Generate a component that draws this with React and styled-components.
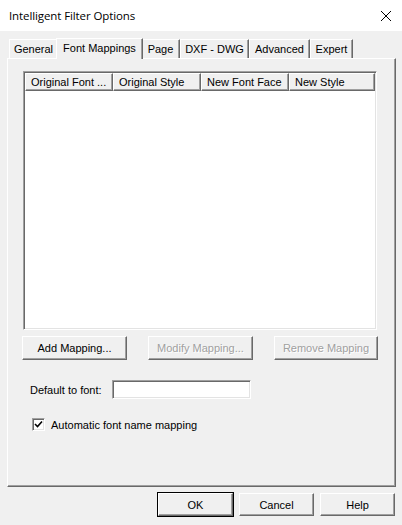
import React from 'react';
import styled, { createGlobalStyle } from 'styled-components';

const GlobalStyle = createGlobalStyle`
    html, body {
        margin: 0;
        padding: 0;
        background: #f0f0f0;
    }
    * {
        box-sizing: border-box;
    }
`

const Window = styled.div`
    width: 402px;
    height: 525px;
    background: #f0f0f0;
    font-family: "Liberation Sans", Arial, sans-serif;
    font-size: 11px;
    color: #000;
    display: flex;
    flex-direction: column;
    overflow: hidden;
`

const TitleBar = styled.div`
    height: 31px;
    background: #fff;
    display: flex;
    align-items: center;
    justify-content: space-between;
    padding: 0 10px 0 9px;
`

const Title = styled.div`
    font-family: "Open Sans", "Liberation Sans", sans-serif;
    font-size: 11.5px;
    letter-spacing: -0.1px;
`

const CloseIcon = () => (
    <svg width="12" height="12" viewBox="0 0 12 12">
        <path d="M1 1 L11 11 M11 1 L1 11" stroke="#000" strokeWidth="1" fill="none" />
    </svg>
)

const TabStrip = styled.div`
    display: flex;
    align-items: flex-end;
    height: 27px;
    padding-left: 9px;
`

const Tab = styled.div`
    width: ${p => p.w}px;
    height: ${p => (p.active ? '21px' : '19px')};
    padding-bottom: ${p => (p.active ? '3px' : '0')};
    margin: 0 ${p => (p.active ? '-2px' : '0')} ${p => (p.active ? '-1px' : '0')};
    display: flex;
    align-items: center;
    justify-content: center;
    background: #f0f0f0;
    border-top: 1px solid #fff;
    border-left: 1px solid #fff;
    border-right: 1px solid #696969;
    box-shadow: inset -1px 0 0 #a0a0a0;
    position: relative;
    z-index: ${p => (p.active ? 2 : 1)};
    white-space: nowrap;
`

const Panel = styled.div`
    margin-left: 7px;
    width: 389px;
    height: 429px;
    border-top: 1px solid #fff;
    border-left: 1px solid #fff;
    border-right: 1px solid #696969;
    border-bottom: 1px solid #696969;
    box-shadow: inset -1px -1px 0 #a0a0a0;
    padding: 12px 0 0 15px;
    display: flex;
    flex-direction: column;
`

const ListView = styled.div`
    width: 354px;
    height: 259px;
    background: #fff;
    border-top: 1px solid #a0a0a0;
    border-left: 1px solid #a0a0a0;
    border-right: 1px solid #fff;
    border-bottom: 1px solid #fff;
    box-shadow: inset 1px 1px 0 #696969, inset -1px -1px 0 #e3e3e3;
    padding: 1px;
    display: flex;
    flex-direction: column;
`

const HeaderRow = styled.div`
    display: flex;
    height: 18px;
`

const HeaderCell = styled.div`
    width: ${p => p.w}px;
    flex: ${p => (p.grow ? 1 : 'none')};
    height: 18px;
    background: #f0f0f0;
    border-top: 1px solid #fff;
    border-left: 1px solid #fff;
    border-right: 1px solid #696969;
    border-bottom: 1px solid #696969;
    box-shadow: inset -1px -1px 0 #a0a0a0;
    padding-left: 5px;
    display: flex;
    align-items: center;
    white-space: nowrap;
    overflow: hidden;
`

const ButtonRow = styled.div`
    display: flex;
    gap: ${p => p.gap}px;
    margin: ${p => p.mt}px 0 0 -1px;
`

const Button = styled.div`
    width: ${p => p.w}px;
    height: ${p => p.h || 24}px;
    display: flex;
    align-items: center;
    justify-content: center;
    background: #f0f0f0;
    color: ${p => (p.disabled ? '#a0a0a0' : '#000')};
    text-shadow: ${p => (p.disabled ? '1px 1px 0 #fff' : 'none')};
    border-top: 1px solid #fff;
    border-left: 1px solid #fff;
    border-right: 1px solid #696969;
    border-bottom: 1px solid #696969;
    box-shadow: inset -1px -1px 0 #a0a0a0, ${p => (p.dflt ? '0 0 0 1px #000' : '0 0 0 0 transparent')};
    white-space: nowrap;
`

const FieldRow = styled.div`
    display: flex;
    align-items: center;
    margin-top: 20px;
    padding-left: 7px;
`

const Label = styled.span`
    width: 82px;
`

const TextInput = styled.div`
    width: 139px;
    height: 19px;
    background: #fff;
    border-top: 1px solid #a0a0a0;
    border-left: 1px solid #a0a0a0;
    border-right: 1px solid #fff;
    border-bottom: 1px solid #fff;
    box-shadow: inset 1px 1px 0 #696969, inset -1px -1px 0 #e3e3e3;
`

const CheckRow = styled.div`
    display: flex;
    align-items: center;
    gap: 6px;
    margin-top: 19px;
    padding-left: 9px;
`

const CheckBox = styled.div`
    width: 13px;
    height: 13px;
    background: #fff;
    border-top: 1px solid #a0a0a0;
    border-left: 1px solid #a0a0a0;
    border-right: 1px solid #fff;
    border-bottom: 1px solid #fff;
    box-shadow: inset 1px 1px 0 #696969, inset -1px -1px 0 #e3e3e3;
    display: flex;
    align-items: center;
    justify-content: center;
`

const Footer = styled.div`
    display: flex;
    justify-content: flex-end;
    gap: 6px;
    padding: 6px 7px 0 0;
`

const tabs = [
    { label: 'General', w: 49 },
    { label: 'Font Mappings', w: 87, active: true },
    { label: 'Page', w: 39 },
    { label: 'DXF - DWG', w: 69 },
    { label: 'Advanced', w: 61 },
    { label: 'Expert', w: 43 },
]

const columns = [
    { label: 'Original Font ...', w: 88 },
    { label: 'Original Style', w: 88 },
    { label: 'New Font Face', w: 88 },
    { label: 'New Style', w: 88 },
]

const App = () => (
    <Window>
        <GlobalStyle />
        <TitleBar>
            <Title>Intelligent Filter Options</Title>
            <CloseIcon />
        </TitleBar>
        <TabStrip>
            {tabs.map(t => (
                <Tab key={t.label} w={t.w} active={t.active}>{t.label}</Tab>
            ))}
        </TabStrip>
        <Panel>
            <ListView>
                <HeaderRow>
                    {columns.map((c, i) => (
                        <HeaderCell key={c.label} w={c.w} grow={i === columns.length - 1}>{c.label}</HeaderCell>
                    ))}
                </HeaderRow>
            </ListView>
            <ButtonRow gap={21} mt={6}>
                <Button w={105}>Add Mapping...</Button>
                <Button w={105} disabled>Modify Mapping...</Button>
                <Button w={104} disabled>Remove Mapping</Button>
            </ButtonRow>
            <FieldRow>
                <Label>Default to font:</Label>
                <TextInput />
            </FieldRow>
            <CheckRow>
                <CheckBox>
                    <svg width="9" height="9" viewBox="0 0 9 9">
                        <path d="M1 4 L3.5 6.5 L8 1.5" stroke="#000" strokeWidth="1.6" fill="none" />
                    </svg>
                </CheckBox>
                <span>Automatic font name mapping</span>
            </CheckRow>
        </Panel>
        <Footer>
            <Button w={75} h={23} dflt>OK</Button>
            <Button w={75} h={23}>Cancel</Button>
            <Button w={75} h={23}>Help</Button>
        </Footer>
    </Window>
)

export default App
